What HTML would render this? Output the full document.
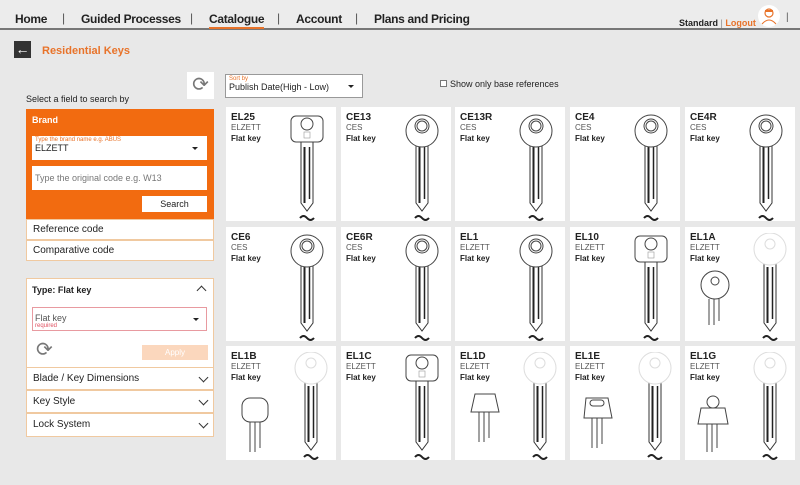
<!DOCTYPE html>
<html><head><style>
*{box-sizing:border-box;margin:0;padding:0}
body{width:800px;height:485px;background:#e8e8e8;font-family:"Liberation Sans",sans-serif;position:relative;overflow:hidden;color:#222}
.a{position:absolute}
.nav{font-weight:bold;font-size:12px;letter-spacing:-0.3px;top:12px}
.sep{top:11px;font-size:12px;color:#555}
.card{position:absolute;background:#fff;width:110px;height:114px}
.card b{position:absolute;left:5px;top:5px;font-size:10px}
.card i{position:absolute;left:5px;top:16px;font-size:8px;font-style:normal;color:#555}
.card u{position:absolute;left:5px;top:27px;font-size:8px;text-decoration:none;font-weight:bold}
.card svg{position:absolute;left:58px;top:6px}
.row{position:absolute;left:26px;width:188px;background:#fff;border:1px solid #f0c9a0;font-size:10px;padding-left:6px}
.chev{position:absolute;right:6px;top:6px;width:7px;height:7px;border-right:1.5px solid #333;border-bottom:1.5px solid #333;transform:rotate(45deg)}
</style></head><body>
<div class="a" style="left:0;top:0;width:800px;height:30px;background:#ececec;border-bottom:2px solid #777"></div>
<div class="a nav" style="left:15px">Home</div>
<div class="a sep" style="left:62px">|</div>
<div class="a nav" style="left:81px">Guided Processes</div>
<div class="a sep" style="left:190px">|</div>
<div class="a nav" style="left:209px;border-bottom:2px solid #e8732a;padding-bottom:1px">Catalogue</div>
<div class="a sep" style="left:277px">|</div>
<div class="a nav" style="left:296px">Account</div>
<div class="a sep" style="left:355px">|</div>
<div class="a nav" style="left:374px">Plans and Pricing</div>
<div class="a" style="left:679px;top:18px;font-size:9px;font-weight:bold">Standard <span style="color:#888;font-weight:normal">|</span> <span style="color:#e8732a">Logout</span></div>
<div class="a" style="left:758px;top:5px;width:22px;height:22px;border-radius:50%;background:#fff"><svg width="22" height="22"><circle cx="11" cy="8" r="4" fill="none" stroke="#e8732a" stroke-width="1.2"/><path d="M7 6h8" stroke="#e8732a" stroke-width="2"/><path d="M4 19q7-8 14 0" fill="none" stroke="#e8732a" stroke-width="1"/></svg></div>
<div class="a" style="left:786px;top:12px;font-size:10px;color:#555">|</div>

<div class="a" style="left:14px;top:41px;width:17px;height:17px;background:#333;color:#fff;font-size:14px;line-height:16px;text-align:center">&#8592;</div>
<div class="a" style="left:42px;top:45px;font-size:11px;font-weight:bold;color:#e8732a">Residential Keys</div>

<div class="a" style="left:187px;top:72px;width:27px;height:27px;background:#fff;color:#777;font-size:20px;text-align:center;line-height:27px">&#10227;</div>
<div class="a" style="left:225px;top:74px;width:138px;height:24px;background:#fff;border:1px solid #999"><div style="font-size:6px;color:#e8732a;padding:1px 3px 0">Sort by</div><div style="font-size:9px;padding-left:3px">Publish Date(High - Low)</div><div class="a" style="right:8px;top:10px;border:3px solid transparent;border-top:3px solid #222"></div></div>
<div class="a" style="left:440px;top:80px;width:7px;height:7px;border:1px solid #777;background:#fff"></div>
<div class="a" style="left:450px;top:79px;font-size:9px">Show only base references</div>

<div class="a" style="left:26px;top:94px;font-size:9px">Select a field to search by</div>
<div class="a" style="left:26px;top:109px;width:188px;height:110px;background:#f26b10"></div>
<div class="a" style="left:32px;top:115px;font-size:9px;font-weight:bold;color:#fff">Brand</div>
<div class="a" style="left:32px;top:136px;width:175px;height:24px;background:#fff"><div style="font-size:6px;color:#e8732a;padding:1px 3px 0">Type the brand name e.g. ABUS</div><div style="font-size:9px;padding-left:3px">ELZETT</div><div class="a" style="right:9px;top:11px;border:3px solid transparent;border-top:3px solid #222"></div></div>
<div class="a" style="left:32px;top:166px;width:175px;height:24px;background:#fff;font-size:9px;color:#777;padding:7px 3px">Type the original code e.g. W13</div>
<div class="a" style="left:142px;top:196px;width:65px;height:16px;background:#fff;font-size:9px;text-align:center;line-height:16px">Search</div>
<div class="row" style="top:219px;height:21px;line-height:20px">Reference code</div>
<div class="row" style="top:240px;height:21px;line-height:20px">Comparative code</div>

<div class="a" style="left:26px;top:278px;width:188px;height:159px;background:#fff;border:1px solid #f0c9a0"></div>
<div class="a" style="left:32px;top:285px;font-size:9px;font-weight:bold">Type: Flat key</div>
<div class="a" style="left:198px;top:287px;width:7px;height:7px;border-left:1.5px solid #333;border-top:1.5px solid #333;transform:rotate(45deg)"></div>
<div class="a" style="left:32px;top:307px;width:175px;height:24px;border:1px solid #e89aa0;font-size:9px;color:#555;padding:5px 2px">Flat key<div style="font-size:6px;color:#e05060">required</div><div class="a" style="right:7px;top:10px;border:3px solid transparent;border-top:3px solid #222"></div></div>
<div class="a" style="left:36px;top:337px;font-size:20px;color:#777">&#10227;</div>
<div class="a" style="left:142px;top:345px;width:66px;height:15px;background:#fbd7bd;color:#fff;font-size:8px;text-align:center;line-height:15px">Apply</div>
<div class="row" style="top:367px;height:23px;line-height:22px">Blade / Key Dimensions<span class="chev"></span></div>
<div class="row" style="top:390px;height:23px;line-height:22px">Key Style<span class="chev"></span></div>
<div class="row" style="top:413px;height:24px;line-height:22px">Lock System<span class="chev"></span></div>

<svg width="0" height="0" style="position:absolute"><defs>
<g id="bl"><path d="M17 28v62l6 8 6-8V28z" fill="#fff" stroke="#333" stroke-width="1"/><path d="M20.5 34v56" stroke="#222" stroke-width="2"/><path d="M25.5 34v52" stroke="#222" stroke-width="1.5"/><path d="M16 105q3.5-4 7 0t7 0" fill="none" stroke="#222" stroke-width="2"/></g>
<g id="sq"><use href="#bl"/><rect x="7" y="3" width="32" height="26" rx="5" fill="#fff" stroke="#444"/><circle cx="23" cy="11" r="6" fill="none" stroke="#444"/><rect x="20" y="19" width="6" height="6" fill="none" stroke="#999" stroke-width=".6"/></g>
<g id="rd"><use href="#bl"/><circle cx="23" cy="18" r="16" fill="#fff" stroke="#444"/><circle cx="23" cy="13" r="7" fill="none" stroke="#444"/><circle cx="23" cy="13" r="5" fill="none" stroke="#444"/></g>
<g id="gh"><use href="#bl" x="4"/><circle cx="27" cy="16" r="16" fill="#fff" stroke="#ddd"/><circle cx="27" cy="11" r="5" fill="none" stroke="#ddd"/></g>
</defs></svg>

<div class="card" style="left:226px;top:107px"><b>EL25</b><i>ELZETT</i><u>Flat key</u><svg width="50" height="112"><use href="#sq"/></svg></div>
<div class="card" style="left:341px;top:107px"><b>CE13</b><i>CES</i><u>Flat key</u><svg width="50" height="112"><use href="#rd"/></svg></div>
<div class="card" style="left:455px;top:107px"><b>CE13R</b><i>CES</i><u>Flat key</u><svg width="50" height="112"><use href="#rd"/></svg></div>
<div class="card" style="left:570px;top:107px"><b>CE4</b><i>CES</i><u>Flat key</u><svg width="50" height="112"><use href="#rd"/></svg></div>
<div class="card" style="left:685px;top:107px"><b>CE4R</b><i>CES</i><u>Flat key</u><svg width="50" height="112"><use href="#rd"/></svg></div>

<div class="card" style="left:226px;top:227px"><b>CE6</b><i>CES</i><u>Flat key</u><svg width="50" height="112"><use href="#rd"/></svg></div>
<div class="card" style="left:341px;top:227px"><b>CE6R</b><i>CES</i><u>Flat key</u><svg width="50" height="112"><use href="#rd"/></svg></div>
<div class="card" style="left:455px;top:227px"><b>EL1</b><i>ELZETT</i><u>Flat key</u><svg width="50" height="112"><use href="#rd"/></svg></div>
<div class="card" style="left:570px;top:227px"><b>EL10</b><i>ELZETT</i><u>Flat key</u><svg width="50" height="112"><use href="#sq"/></svg></div>
<div class="card" style="left:685px;top:227px"><b>EL1A</b><i>ELZETT</i><u>Flat key</u><svg width="50" height="112"><use href="#gh"/></svg><svg style="left:10px;top:40px" width="40" height="70"><circle cx="20" cy="18" r="14" fill="#fff" stroke="#444"/><circle cx="20" cy="14" r="4" fill="none" stroke="#444"/><path d="M14 32v26M19 32v26M24 32v22" stroke="#444"/></svg></div>

<div class="card" style="left:226px;top:346px"><b>EL1B</b><i>ELZETT</i><u>Flat key</u><svg width="50" height="112"><use href="#gh"/></svg><svg style="left:10px;top:48px" width="40" height="66"><rect x="6" y="4" width="26" height="24" rx="8" fill="#fff" stroke="#444"/><path d="M14 28v30M19 28v30M24 28v26" stroke="#444"/></svg></div>
<div class="card" style="left:341px;top:346px"><b>EL1C</b><i>ELZETT</i><u>Flat key</u><svg width="50" height="112"><use href="#sq"/></svg></div>
<div class="card" style="left:455px;top:346px"><b>EL1D</b><i>ELZETT</i><u>Flat key</u><svg width="50" height="112"><use href="#gh"/></svg><svg style="left:10px;top:40px" width="40" height="70"><path d="M10 8h20l4 18H6z" fill="#fff" stroke="#444"/><path d="M14 26v30M19 26v30M24 26v26" stroke="#444"/></svg></div>
<div class="card" style="left:570px;top:346px"><b>EL1E</b><i>ELZETT</i><u>Flat key</u><svg width="50" height="112"><use href="#gh"/></svg><svg style="left:8px;top:46px" width="40" height="66"><path d="M8 6h22l4 20H6z" fill="#fff" stroke="#444"/><rect x="12" y="8" width="14" height="6" rx="3" fill="none" stroke="#444"/><path d="M14 26v30M19 26v30M24 26v26" stroke="#444"/></svg></div>
<div class="card" style="left:685px;top:346px"><b>EL1G</b><i>ELZETT</i><u>Flat key</u><svg width="50" height="112"><use href="#gh"/></svg><svg style="left:8px;top:48px" width="40" height="66"><circle cx="20" cy="8" r="6" fill="#fff" stroke="#444"/><path d="M8 14h24l3 16H5z" fill="#fff" stroke="#444"/><path d="M14 30v28M19 30v28M24 30v24" stroke="#444"/></svg></div>
</body></html>
